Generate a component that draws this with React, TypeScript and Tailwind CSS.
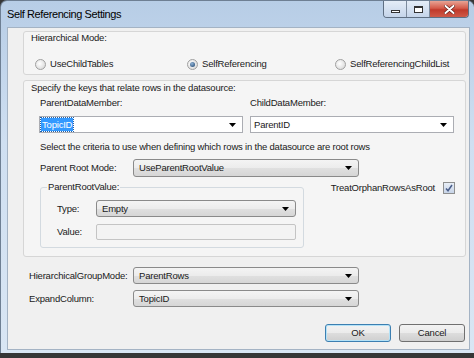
import type { ReactNode } from "react";

const Arrow = () => (
  <svg width="7" height="4" viewBox="0 0 7 4" className="shrink-0">
    <path d="M0 0h7L3.5 4z" fill="#000" />
  </svg>
);

function EditCombo({ children }: { children: ReactNode }) {
  return (
    <div className="flex h-[17px] w-[204px] items-center justify-between border border-[#abadb3] bg-white pr-[6px] pl-[1px]">
      <div className="flex h-full items-center">{children}</div>
      <Arrow />
    </div>
  );
}

function ListCombo({ value, w, h }: { value: string; w: string; h: string }) {
  return (
    <div
      className={`${w} ${h} flex items-center justify-between rounded-[3px] border border-[#8a8a8a] bg-[linear-gradient(#f4f4f4_0%,#ececec_50%,#e0e0e0_51%,#d6d6d6_100%)] pr-[6px] pl-[5px]`}
    >
      <span>{value}</span>
      <Arrow />
    </div>
  );
}

function Radio({ label, checked, w }: { label: string; checked?: boolean; w: string }) {
  return (
    <div className={`${w} flex items-center gap-[4px]`}>
      <div className="flex h-[11px] w-[11px] items-center justify-center rounded-full border border-[#a0a0a0] bg-[radial-gradient(circle_at_40%_40%,#ffffff,#d2d2d2)]">
        {checked && <div className="h-[5px] w-[5px] rounded-full bg-[radial-gradient(circle_at_40%_35%,#8fb4d8,#1b3e66)]" />}
      </div>
      <span>{label}</span>
    </div>
  );
}

export default function App() {
  return (
    <div className="h-[358px] w-[474px] overflow-hidden bg-[#363636] font-['Liberation_Sans',Arial,sans-serif] text-[9.5px] leading-[12px] tracking-[-0.2px] text-[#1a1a1a]">
      <div className="flex h-[353px] w-[474px] flex-col rounded-t-[7px] border-t border-l border-[#6e7f93] bg-[linear-gradient(180deg,#b7cde6_0%,#cfdff1_40%,#d9e6f4_100%)] pr-[4px] pb-[3px] pl-[6px]">
        {/* title bar */}
        <div className="flex h-[26px] shrink-0 items-start">
          <div className="mt-[6px] text-[11px] leading-[14px] tracking-[-0.4px] text-black">Self Referencing Settings</div>
          <div className="ml-auto mr-[1px] flex h-[17px] overflow-hidden rounded-b-[4px] border border-t-0 border-[#5f6f82]">
            <div className="flex w-[23px] items-end justify-center border-r border-[#7c8a9c] bg-[linear-gradient(#e4edf7,#c5d5ea)] pb-[4px]">
              <div className="h-[3px] w-[9px] border border-[#333] bg-white" />
            </div>
            <div className="flex w-[23px] items-center justify-center border-r border-[#7c8a9c] bg-[linear-gradient(#e4edf7,#c5d5ea)]">
              <div className="h-[7px] w-[9px] border border-t-2 border-[#333] bg-white" />
            </div>
            <div className="flex w-[38px] items-center justify-center bg-[linear-gradient(#e8a394_0%,#d45b4a_45%,#c03a2b_55%,#cf5a48_100%)]">
              <svg width="11" height="9" viewBox="0 0 11 9">
                <path d="M1.5 1l8 7M9.5 1l-8 7" stroke="#5a1a14" strokeWidth="3.2" strokeLinecap="round" />
                <path d="M1.5 1l8 7M9.5 1l-8 7" stroke="#fff" strokeWidth="2" strokeLinecap="round" />
              </svg>
            </div>
          </div>
        </div>

        {/* client area */}
        <div className="flex flex-1 flex-col border border-[#a4b3c4] bg-[#f0f0f0] pr-[3px] pl-[15px]">
          {/* Hierarchical mode */}
          <div className="mt-[3px] h-[44px] rounded-[3px] border border-[#d6d6d6] bg-[#f5f5f5]">
            <div className="pl-[7px]">Hierarchical Mode:</div>
            <div className="mt-[14px] flex h-[12px] pl-[11px]">
              <Radio w="w-[152px]" label="UseChildTables" />
              <Radio w="w-[148px]" label="SelfReferencing" checked />
              <Radio w="w-[120px]" label="SelfReferencingChildList" />
            </div>
          </div>

          {/* keys */}
          <div className="mt-[5px] h-[177px] rounded-[3px] border border-[#d6d6d6] bg-[#f5f5f5]">
            <div className="mt-[1px] pl-[7px]">Specify the keys that relate rows in the datasource:</div>
            <div className="mt-[3px] grid grid-cols-[204px_204px] gap-x-[7px] pl-[15px]">
              <div className="pl-[1px]">ParentDataMember:</div>
              <div>ChildDataMember:</div>
              <div className="mt-[7px]">
                <EditCombo>
                  <span className="flex h-[13px] items-center bg-[#3399ff] px-[1px] text-white outline outline-dotted outline-[#1f5fa8]">TopicID</span>
                </EditCombo>
              </div>
              <div className="mt-[7px]">
                <EditCombo>
                  <span className="pl-[2px]">ParentID</span>
                </EditCombo>
              </div>
            </div>
            <div className="mt-[8px] pl-[16px]">Select the criteria to use when defining which rows in the datasource are root rows</div>
            <div className="mt-[6px] flex items-center pl-[16px]">
              <div className="w-[93px]">Parent Root Mode:</div>
              <ListCombo value="UseParentRootValue" w="w-[226px]" h="h-[18px]" />
            </div>
            <div className="mt-[4px] flex items-start justify-between pr-[10px] pl-[16px]">
              <fieldset className="w-[264px] rounded-[3px] border border-[#d3dae0]">
                <legend className="ml-[6px] px-[1px] leading-[12px]">ParentRootValue:</legend>
                <div className="flex flex-col gap-[7px] pt-[7px] pb-[7px] pl-[16px]">
                  <div className="flex items-center">
                    <div className="w-[39px]">Type:</div>
                    <ListCombo value="Empty" w="w-[200px]" h="h-[17px]" />
                  </div>
                  <div className="flex items-center">
                    <div className="w-[39px]">Value:</div>
                    <div className="h-[16px] w-[200px] rounded-[2px] border border-[#c4c4c4] bg-[#f3f3f3]" />
                  </div>
                </div>
              </fieldset>
              <div className="mt-[1px] flex items-center gap-[8px]">
                <span>TreatOrphanRowsAsRoot</span>
                <div className="flex h-[12px] w-[12px] items-center justify-center border border-[#8e8f8f] bg-[linear-gradient(#e8eef7,#c7d4e8)]">
                  <svg width="8" height="8" viewBox="0 0 8 8">
                    <path d="M1 4.5l2 2.2L7 1" fill="none" stroke="#4a5e8a" strokeWidth="1.5" />
                  </svg>
                </div>
              </div>
            </div>
          </div>

          {/* group mode */}
          <div className="mt-[10px] flex items-center pl-[6px]">
            <div className="w-[104px]">HierarchicalGroupMode:</div>
            <ListCombo value="ParentRows" w="w-[226px]" h="h-[17px]" />
          </div>
          <div className="mt-[6px] flex items-center pl-[6px]">
            <div className="w-[104px]">ExpandColumn:</div>
            <ListCombo value="TopicID" w="w-[226px]" h="h-[17px]" />
          </div>

          {/* buttons */}
          <div className="mt-[17px] mr-[1px] flex justify-end gap-[8px]">
            <button className="flex h-[18px] w-[66px] items-center justify-center rounded-[3px] border border-[#3c7fb1] bg-[linear-gradient(#f2f2f2_0%,#ebebeb_50%,#dddddd_51%,#cfcfcf_100%)] shadow-[inset_0_0_0_1px_#b4e2f7]">
              OK
            </button>
            <button className="flex h-[18px] w-[66px] items-center justify-center rounded-[3px] border border-[#707070] bg-[linear-gradient(#f2f2f2_0%,#ebebeb_50%,#dddddd_51%,#cfcfcf_100%)]">
              Cancel
            </button>
          </div>
        </div>
      </div>
    </div>
  );
}
